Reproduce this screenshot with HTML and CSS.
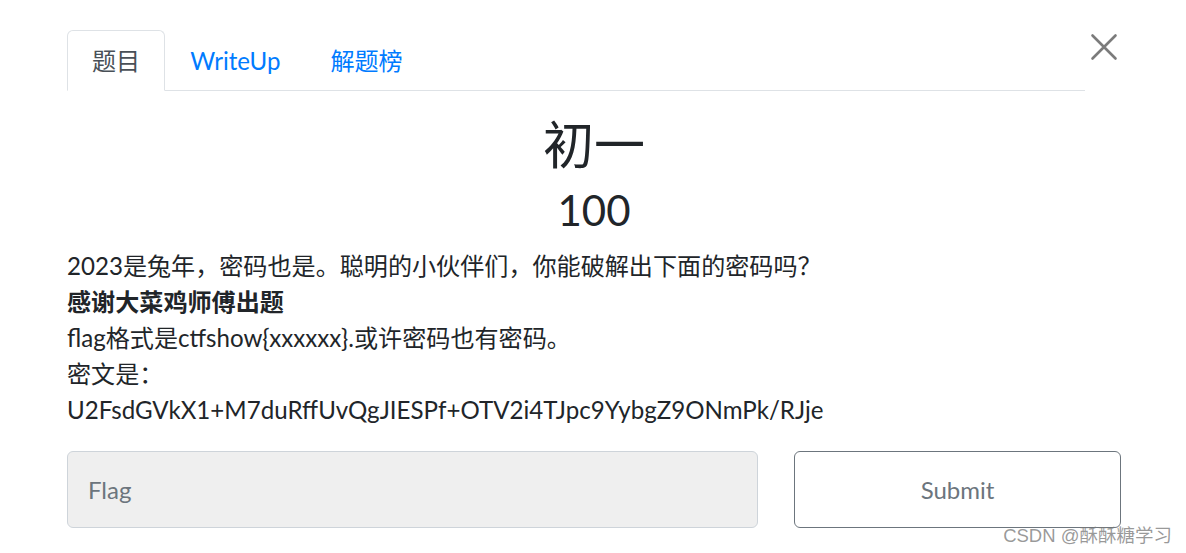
FILE: index.html
```html
<!DOCTYPE html>
<html lang="zh">
<head>
  <meta charset="UTF-8" />
  <title>初一</title>
  <link rel="stylesheet" href="styles.css">
</head>
<body>
  <div class="modal">
    <div class="modal-head">
      <ul class="tabs">
        <li class="tab active">题目</li>
        <li class="tab">WriteUp</li>
        <li class="tab">解题榜</li>
      </ul>
      <button class="close" aria-label="Close">
        <svg width="28" height="28" viewBox="0 0 28 28">
          <path d="M2.5 2.5 L25.5 25.5 M25.5 2.5 L2.5 25.5" stroke="#7b7b7b" stroke-width="2.6" stroke-linecap="round"/>
        </svg>
      </button>
    </div>

    <h2 class="challenge-name">初一</h2>
    <h3 class="challenge-value">100</h3>

    <div class="description">
      <p>2023是兔年，密码也是。聪明的小伙伴们，你能破解出下面的密码吗？</p>
      <p><strong>感谢大菜鸡师傅出题</strong></p>
      <p>flag格式是ctfshow{xxxxxx}.或许密码也有密码。</p>
      <p>密文是：</p>
      <p>U2FsdGVkX1+M7duRffUvQgJIESPf+OTV2i4TJpc9YybgZ9ONmPk/RJje</p>
    </div>

    <form class="submit-row">
      <input type="text" class="flag-input" placeholder="Flag" />
      <button type="button" class="submit-btn">Submit</button>
    </form>
  </div>

  <div class="watermark">CSDN @酥酥糖学习</div>
</body>
</html>
```

FILE: styles.css
```css
body {
  margin: 0;
  font-family: Lato, "Noto Sans CJK SC", sans-serif;
  font-size: 24.1px;
  line-height: 36px;
  color: #212529;
  background: #fff;
}

.modal {
  padding: 30px 65px 0 67px;
}

.modal-head {
  display: flex;
  align-items: flex-start;
}

.tabs {
  list-style: none;
  margin: 0;
  padding: 0;
  display: flex;
  width: 1018px;
  border-bottom: 1px solid #dee2e6;
}

.tab {
  padding: 11.5px 24px;
  border: 1px solid transparent;
  border-top-left-radius: 6px;
  border-top-right-radius: 6px;
  margin-bottom: -1px;
  color: #007bff;
}

.tab.active {
  color: #495057;
  border-color: #dee2e6 #dee2e6 #fff;
}

.close {
  margin: 3px 0 0 5px;
  padding: 0;
  border: none;
  background: none;
  width: 28px;
  height: 28px;
}

.challenge-name {
  text-align: center;
  font-size: 51px;
  line-height: 61px;
  font-weight: 400;
  margin: 22.5px 0 0;
}

.challenge-value {
  text-align: center;
  font-size: 42px;
  line-height: 50px;
  font-weight: 400;
  margin: 10px 0 0;
}

.description {
  margin-top: 13px;
}

.description p {
  margin: 0;
}

.description strong {
  font-weight: 700;
}

.submit-row {
  display: grid;
  grid-template-columns: 691px 327px;
  column-gap: 36px;
  margin-top: 23px;
}

.flag-input {
  height: 77px;
  box-sizing: border-box;
  background: #efefef;
  border: 1px solid #ced4da;
  border-radius: 6px;
  padding: 0 20px;
  font-family: Lato, sans-serif;
  font-size: 24px;
  color: #495057;
}

.flag-input::placeholder {
  color: #6c757d;
}

.submit-btn {
  height: 77px;
  background: #fff;
  border: 1px solid #6c757d;
  border-radius: 6px;
  font-family: Lato, sans-serif;
  font-size: 24px;
  color: #6c757d;
}

.watermark {
  position: absolute;
  right: 14px;
  bottom: 7px;
  font-family: "Liberation Sans", "Noto Sans CJK SC", sans-serif;
  font-size: 18.5px;
  line-height: 20px;
  color: rgba(120, 120, 120, 0.75);
}
```
